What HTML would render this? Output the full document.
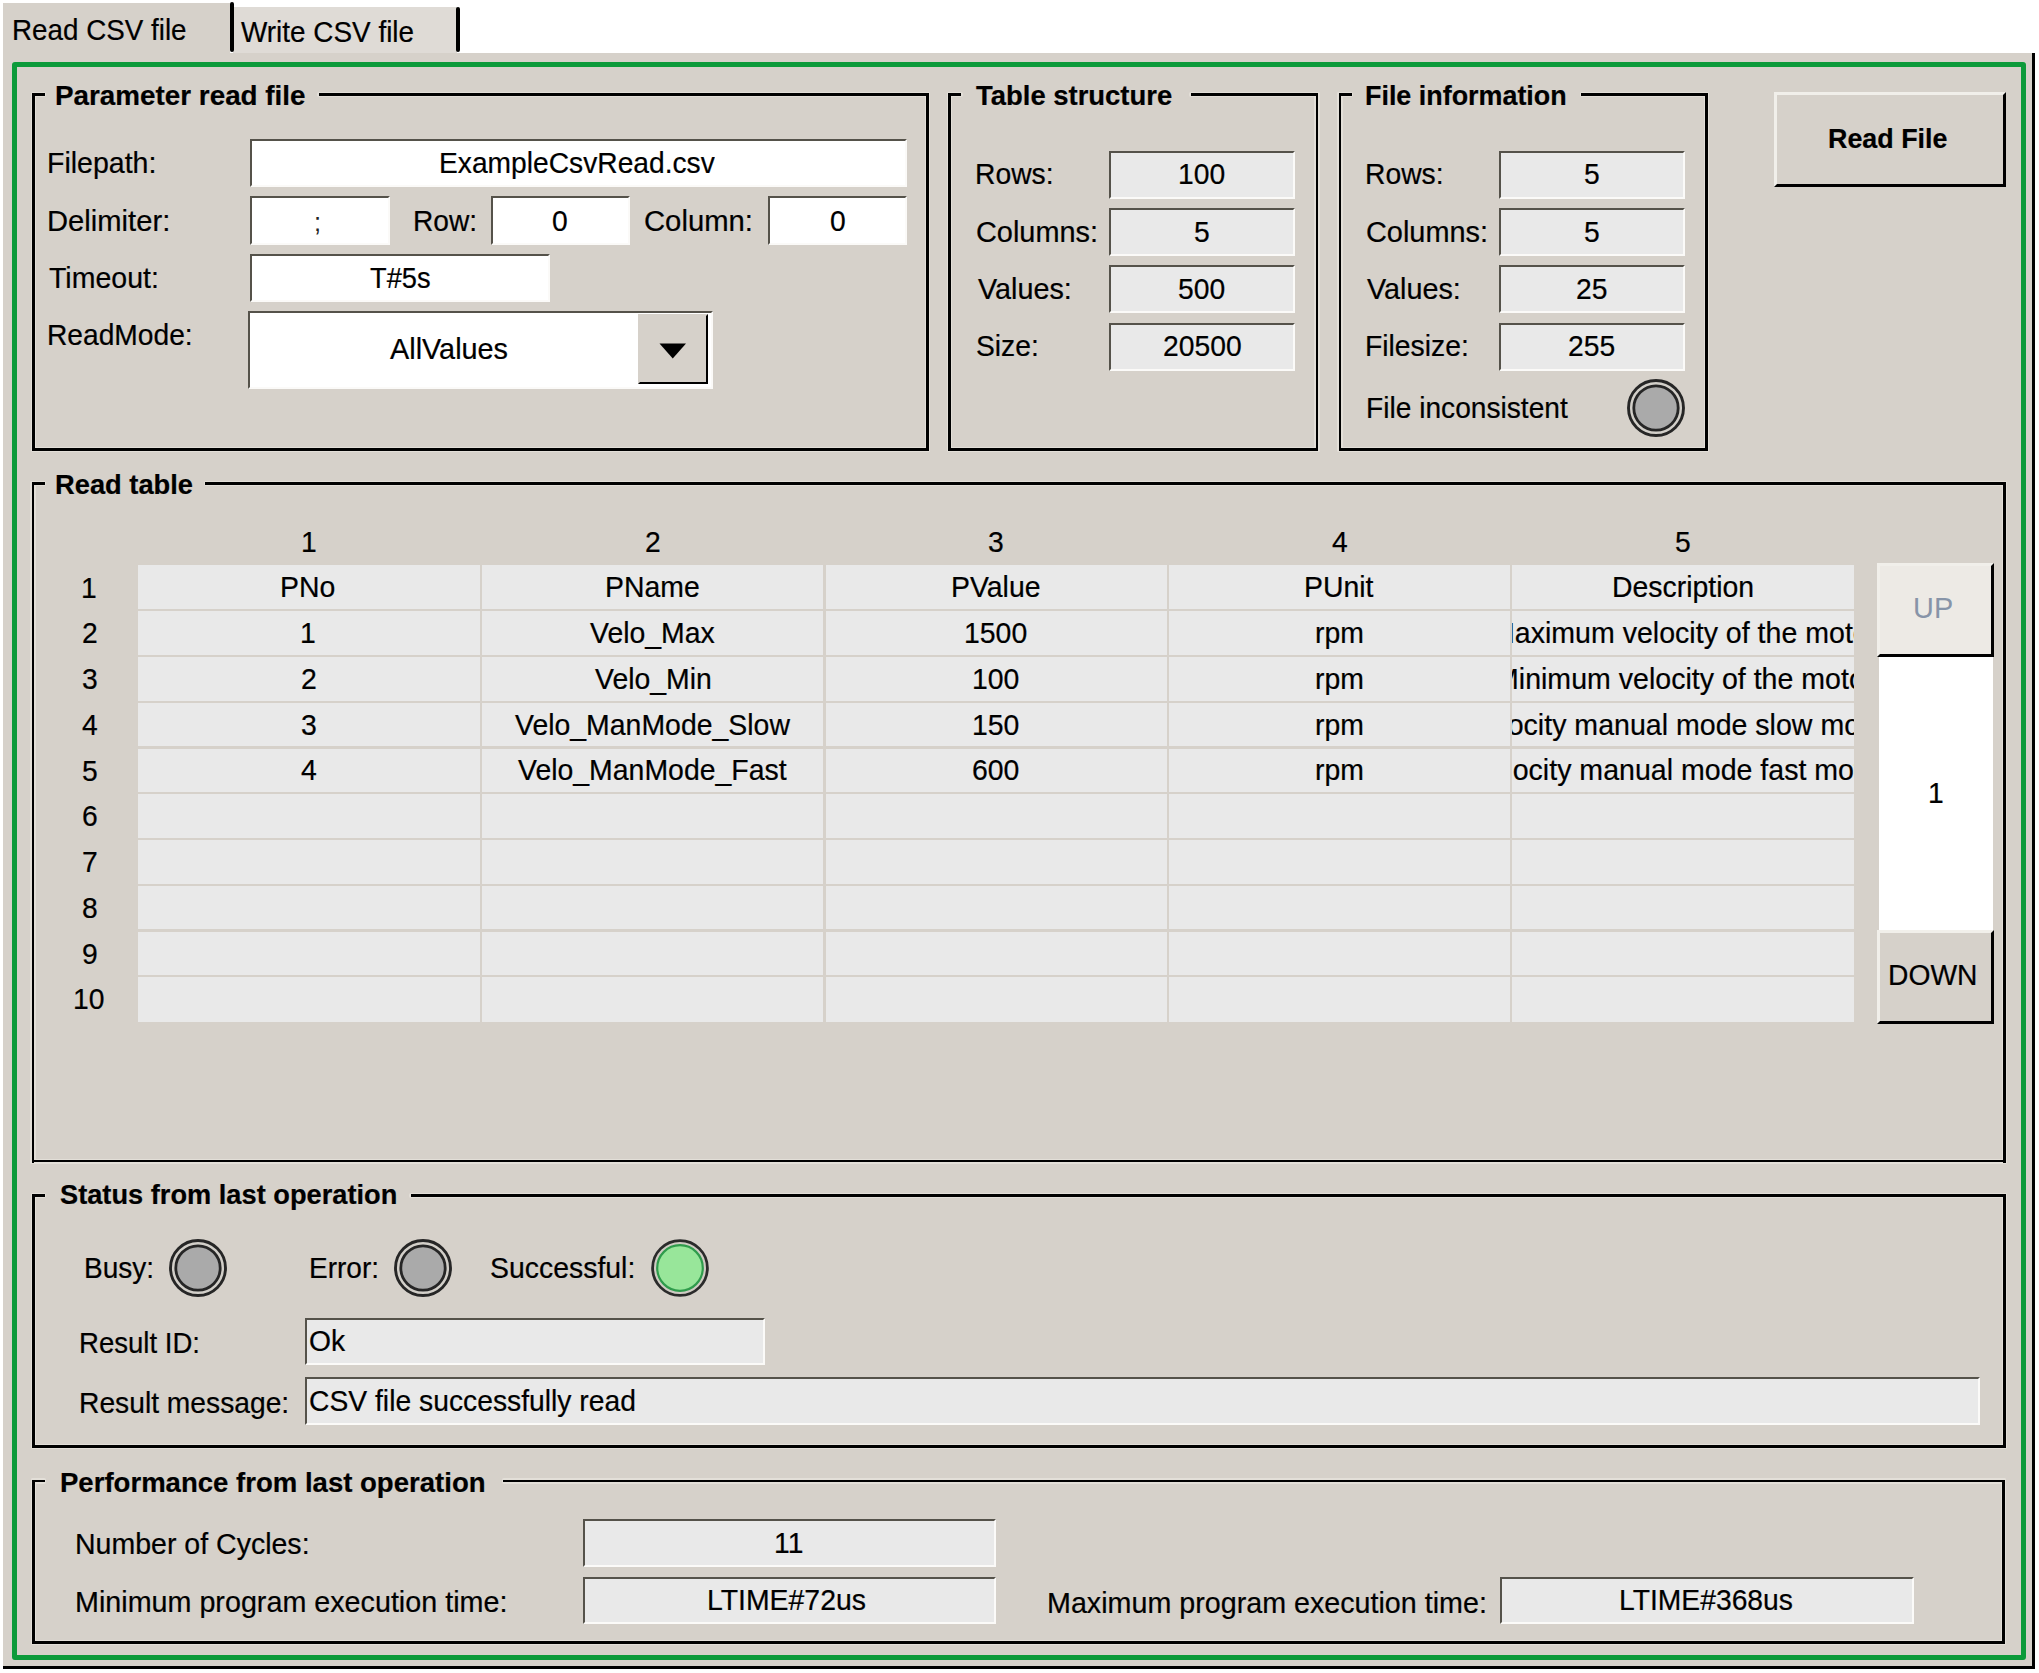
<!DOCTYPE html>
<html><head><meta charset="utf-8"><style>
html,body{margin:0;padding:0;}
body{width:2039px;height:1673px;background:#fff;position:relative;overflow:hidden;font-family:"Liberation Sans",sans-serif;}
body div, body svg{position:absolute;}
.t{white-space:nowrap;-webkit-text-stroke-width:0.2px;}
</style></head><body>
<div style="left:3.00px;top:3.00px;width:227.00px;height:53.00px;background:#d6d1ca;"></div>
<div style="left:233.00px;top:6.50px;width:224.00px;height:49.50px;background:#dfdbd6;"></div>
<div style="left:229.50px;top:2.00px;width:4.00px;height:50.00px;background:#000;border-radius:2px;"></div>
<div style="left:456.00px;top:6.50px;width:4.00px;height:45.50px;background:#000;border-radius:2px;"></div>
<div style="left:3.00px;top:53.00px;width:2032.00px;height:1616.00px;background:#d6d1ca;"></div>
<div style="left:2032.00px;top:53.00px;width:3.20px;height:1616.00px;background:#000;"></div>
<div style="left:3.00px;top:1665.80px;width:2032.20px;height:3.20px;background:#000;"></div>
<div style="left:12.00px;top:62.00px;width:2014.30px;height:1598.20px;background:transparent;box-sizing:border-box;border:5.6px solid #0c9a3a;border-radius:3px;"></div>
<div style="left:30.60px;top:91.60px;width:15.80px;height:5.40px;background:#e3dfd8;border-radius:2px;"></div>
<div style="left:317.40px;top:91.60px;width:612.70px;height:5.40px;background:#e3dfd8;border-radius:2px;"></div>
<div style="left:30.60px;top:91.60px;width:5.40px;height:360.50px;background:#e3dfd8;border-radius:2px;"></div>
<div style="left:924.70px;top:91.60px;width:5.40px;height:360.50px;background:#e3dfd8;border-radius:2px;"></div>
<div style="left:30.60px;top:446.70px;width:899.50px;height:5.40px;background:#e3dfd8;border-radius:2px;"></div>
<div style="left:947.00px;top:91.60px;width:15.80px;height:5.40px;background:#e3dfd8;border-radius:2px;"></div>
<div style="left:1189.30px;top:91.60px;width:130.30px;height:5.40px;background:#e3dfd8;border-radius:2px;"></div>
<div style="left:947.00px;top:91.60px;width:5.40px;height:360.60px;background:#e3dfd8;border-radius:2px;"></div>
<div style="left:1314.20px;top:91.60px;width:5.40px;height:360.60px;background:#e3dfd8;border-radius:2px;"></div>
<div style="left:947.00px;top:446.80px;width:372.60px;height:5.40px;background:#e3dfd8;border-radius:2px;"></div>
<div style="left:1337.40px;top:91.60px;width:15.80px;height:5.40px;background:#e3dfd8;border-radius:2px;"></div>
<div style="left:1579.60px;top:91.60px;width:129.40px;height:5.40px;background:#e3dfd8;border-radius:2px;"></div>
<div style="left:1337.40px;top:91.60px;width:5.40px;height:360.80px;background:#e3dfd8;border-radius:2px;"></div>
<div style="left:1703.60px;top:91.60px;width:5.40px;height:360.80px;background:#e3dfd8;border-radius:2px;"></div>
<div style="left:1337.40px;top:447.00px;width:371.60px;height:5.40px;background:#e3dfd8;border-radius:2px;"></div>
<div style="left:30.40px;top:480.60px;width:15.80px;height:5.40px;background:#e3dfd8;border-radius:2px;"></div>
<div style="left:204.00px;top:480.60px;width:1803.00px;height:5.40px;background:#e3dfd8;border-radius:2px;"></div>
<div style="left:30.40px;top:480.60px;width:5.40px;height:683.30px;background:#e3dfd8;border-radius:2px;"></div>
<div style="left:2001.60px;top:480.60px;width:5.40px;height:683.30px;background:#e3dfd8;border-radius:2px;"></div>
<div style="left:30.40px;top:1158.50px;width:1976.60px;height:5.40px;background:#e3dfd8;border-radius:2px;"></div>
<div style="left:30.60px;top:1192.60px;width:15.80px;height:5.40px;background:#e3dfd8;border-radius:2px;"></div>
<div style="left:409.20px;top:1192.60px;width:1598.20px;height:5.40px;background:#e3dfd8;border-radius:2px;"></div>
<div style="left:30.60px;top:1192.60px;width:5.40px;height:256.60px;background:#e3dfd8;border-radius:2px;"></div>
<div style="left:2002.00px;top:1192.60px;width:5.40px;height:256.60px;background:#e3dfd8;border-radius:2px;"></div>
<div style="left:30.60px;top:1443.80px;width:1976.80px;height:5.40px;background:#e3dfd8;border-radius:2px;"></div>
<div style="left:30.60px;top:1478.40px;width:15.80px;height:5.40px;background:#e3dfd8;border-radius:2px;"></div>
<div style="left:501.90px;top:1478.40px;width:1504.10px;height:5.40px;background:#e3dfd8;border-radius:2px;"></div>
<div style="left:30.60px;top:1478.40px;width:5.40px;height:166.80px;background:#e3dfd8;border-radius:2px;"></div>
<div style="left:2000.60px;top:1478.40px;width:5.40px;height:166.80px;background:#e3dfd8;border-radius:2px;"></div>
<div style="left:30.60px;top:1639.80px;width:1975.40px;height:5.40px;background:#e3dfd8;border-radius:2px;"></div>
<div style="left:32.00px;top:93.00px;width:13.00px;height:2.60px;background:#000;"></div>
<div style="left:318.80px;top:93.00px;width:609.90px;height:2.60px;background:#000;"></div>
<div style="left:32.00px;top:93.00px;width:2.60px;height:357.70px;background:#000;"></div>
<div style="left:926.10px;top:93.00px;width:2.60px;height:357.70px;background:#000;"></div>
<div style="left:32.00px;top:448.10px;width:896.70px;height:2.60px;background:#000;"></div>
<div style="left:250.00px;top:139.00px;width:657.00px;height:48.30px;background:#fff;box-sizing:border-box;border-style:solid;border-width:2.8px;border-color:#55524a #fbfaf8 #fbfaf8 #55524a;"></div>
<div style="left:250.00px;top:196.30px;width:139.60px;height:48.30px;background:#fff;box-sizing:border-box;border-style:solid;border-width:2.8px;border-color:#55524a #fbfaf8 #fbfaf8 #55524a;"></div>
<div style="left:490.80px;top:196.30px;width:139.20px;height:48.30px;background:#fff;box-sizing:border-box;border-style:solid;border-width:2.8px;border-color:#55524a #fbfaf8 #fbfaf8 #55524a;"></div>
<div style="left:768.00px;top:196.30px;width:139.30px;height:48.30px;background:#fff;box-sizing:border-box;border-style:solid;border-width:2.8px;border-color:#55524a #fbfaf8 #fbfaf8 #55524a;"></div>
<div style="left:250.00px;top:254.00px;width:300.00px;height:48.00px;background:#fff;box-sizing:border-box;border-style:solid;border-width:2.8px;border-color:#55524a #fbfaf8 #fbfaf8 #55524a;"></div>
<div style="left:247.60px;top:311.30px;width:465.40px;height:77.90px;background:#fff;box-sizing:border-box;border-style:solid;border-width:2.8px;border-color:#55524a #fbfaf8 #fbfaf8 #55524a;"></div>
<div style="left:637.60px;top:313.90px;width:70.70px;height:70.30px;background:#d6d1ca;box-sizing:border-box;border-style:solid;border-width:2.8px;border-color:#d6d1ca #000 #000 #d6d1ca;"></div>
<svg width="30" height="18" style="position:absolute;left:658px;top:341.5px"><polygon points="1.5,1.5 28,1.5 14.75,16.5" fill="#000"/></svg>
<div style="left:948.40px;top:93.00px;width:13.00px;height:2.60px;background:#000;"></div>
<div style="left:1190.70px;top:93.00px;width:127.50px;height:2.60px;background:#000;"></div>
<div style="left:948.40px;top:93.00px;width:2.60px;height:357.80px;background:#000;"></div>
<div style="left:1315.60px;top:93.00px;width:2.60px;height:357.80px;background:#000;"></div>
<div style="left:948.40px;top:448.20px;width:369.80px;height:2.60px;background:#000;"></div>
<div style="left:1109.30px;top:150.70px;width:185.70px;height:48.00px;background:#e9e9e9;box-sizing:border-box;border-style:solid;border-width:2.8px;border-color:#55524a #fbfaf8 #fbfaf8 #55524a;"></div>
<div style="left:1109.30px;top:208.00px;width:185.70px;height:48.00px;background:#e9e9e9;box-sizing:border-box;border-style:solid;border-width:2.8px;border-color:#55524a #fbfaf8 #fbfaf8 #55524a;"></div>
<div style="left:1109.30px;top:265.30px;width:185.70px;height:48.00px;background:#e9e9e9;box-sizing:border-box;border-style:solid;border-width:2.8px;border-color:#55524a #fbfaf8 #fbfaf8 #55524a;"></div>
<div style="left:1109.30px;top:322.60px;width:185.70px;height:48.00px;background:#e9e9e9;box-sizing:border-box;border-style:solid;border-width:2.8px;border-color:#55524a #fbfaf8 #fbfaf8 #55524a;"></div>
<div style="left:1338.80px;top:93.00px;width:13.00px;height:2.60px;background:#000;"></div>
<div style="left:1581.00px;top:93.00px;width:126.60px;height:2.60px;background:#000;"></div>
<div style="left:1338.80px;top:93.00px;width:2.60px;height:358.00px;background:#000;"></div>
<div style="left:1705.00px;top:93.00px;width:2.60px;height:358.00px;background:#000;"></div>
<div style="left:1338.80px;top:448.40px;width:368.80px;height:2.60px;background:#000;"></div>
<div style="left:1499.00px;top:150.70px;width:186.00px;height:48.00px;background:#e9e9e9;box-sizing:border-box;border-style:solid;border-width:2.8px;border-color:#55524a #fbfaf8 #fbfaf8 #55524a;"></div>
<div style="left:1499.00px;top:208.00px;width:186.00px;height:48.00px;background:#e9e9e9;box-sizing:border-box;border-style:solid;border-width:2.8px;border-color:#55524a #fbfaf8 #fbfaf8 #55524a;"></div>
<div style="left:1499.00px;top:265.30px;width:186.00px;height:48.00px;background:#e9e9e9;box-sizing:border-box;border-style:solid;border-width:2.8px;border-color:#55524a #fbfaf8 #fbfaf8 #55524a;"></div>
<div style="left:1499.00px;top:322.60px;width:186.00px;height:48.00px;background:#e9e9e9;box-sizing:border-box;border-style:solid;border-width:2.8px;border-color:#55524a #fbfaf8 #fbfaf8 #55524a;"></div>
<svg width="62" height="62" style="position:absolute;left:1625.2px;top:377.2px"><circle cx="31" cy="31" r="27.5" fill="#d2cfc9" stroke="#262626" stroke-width="2.9"/><circle cx="31" cy="31" r="22.2" fill="#aaaaaa" stroke="#262626" stroke-width="2.8"/></svg>
<div style="left:1773.70px;top:92.30px;width:231.90px;height:95.10px;background:#d6d1ca;box-sizing:border-box;border-style:solid;border-width:3px;border-color:#f1efea #000 #000 #f1efea;"></div>
<div style="left:31.80px;top:482.00px;width:13.00px;height:2.60px;background:#000;"></div>
<div style="left:205.40px;top:482.00px;width:1800.20px;height:2.60px;background:#000;"></div>
<div style="left:31.80px;top:482.00px;width:2.60px;height:680.50px;background:#000;"></div>
<div style="left:2003.00px;top:482.00px;width:2.60px;height:680.50px;background:#000;"></div>
<div style="left:31.80px;top:1159.90px;width:1973.80px;height:2.60px;background:#000;"></div>
<div style="left:137.70px;top:564.50px;width:342.14px;height:44.55px;background:#e9e9e9;"></div>
<div style="left:482.24px;top:564.50px;width:340.94px;height:44.55px;background:#e9e9e9;"></div>
<div style="left:825.58px;top:564.50px;width:340.94px;height:44.55px;background:#e9e9e9;"></div>
<div style="left:1168.92px;top:564.50px;width:340.94px;height:44.55px;background:#e9e9e9;"></div>
<div style="left:1512.26px;top:564.50px;width:342.14px;height:44.55px;background:#e9e9e9;"></div>
<div style="left:137.70px;top:611.45px;width:342.14px;height:43.35px;background:#e9e9e9;"></div>
<div style="left:482.24px;top:611.45px;width:340.94px;height:43.35px;background:#e9e9e9;"></div>
<div style="left:825.58px;top:611.45px;width:340.94px;height:43.35px;background:#e9e9e9;"></div>
<div style="left:1168.92px;top:611.45px;width:340.94px;height:43.35px;background:#e9e9e9;"></div>
<div style="left:1512.26px;top:611.45px;width:342.14px;height:43.35px;background:#e9e9e9;"></div>
<div style="left:137.70px;top:657.20px;width:342.14px;height:43.35px;background:#e9e9e9;"></div>
<div style="left:482.24px;top:657.20px;width:340.94px;height:43.35px;background:#e9e9e9;"></div>
<div style="left:825.58px;top:657.20px;width:340.94px;height:43.35px;background:#e9e9e9;"></div>
<div style="left:1168.92px;top:657.20px;width:340.94px;height:43.35px;background:#e9e9e9;"></div>
<div style="left:1512.26px;top:657.20px;width:342.14px;height:43.35px;background:#e9e9e9;"></div>
<div style="left:137.70px;top:702.95px;width:342.14px;height:43.35px;background:#e9e9e9;"></div>
<div style="left:482.24px;top:702.95px;width:340.94px;height:43.35px;background:#e9e9e9;"></div>
<div style="left:825.58px;top:702.95px;width:340.94px;height:43.35px;background:#e9e9e9;"></div>
<div style="left:1168.92px;top:702.95px;width:340.94px;height:43.35px;background:#e9e9e9;"></div>
<div style="left:1512.26px;top:702.95px;width:342.14px;height:43.35px;background:#e9e9e9;"></div>
<div style="left:137.70px;top:748.70px;width:342.14px;height:43.35px;background:#e9e9e9;"></div>
<div style="left:482.24px;top:748.70px;width:340.94px;height:43.35px;background:#e9e9e9;"></div>
<div style="left:825.58px;top:748.70px;width:340.94px;height:43.35px;background:#e9e9e9;"></div>
<div style="left:1168.92px;top:748.70px;width:340.94px;height:43.35px;background:#e9e9e9;"></div>
<div style="left:1512.26px;top:748.70px;width:342.14px;height:43.35px;background:#e9e9e9;"></div>
<div style="left:137.70px;top:794.45px;width:342.14px;height:43.35px;background:#e9e9e9;"></div>
<div style="left:482.24px;top:794.45px;width:340.94px;height:43.35px;background:#e9e9e9;"></div>
<div style="left:825.58px;top:794.45px;width:340.94px;height:43.35px;background:#e9e9e9;"></div>
<div style="left:1168.92px;top:794.45px;width:340.94px;height:43.35px;background:#e9e9e9;"></div>
<div style="left:1512.26px;top:794.45px;width:342.14px;height:43.35px;background:#e9e9e9;"></div>
<div style="left:137.70px;top:840.20px;width:342.14px;height:43.35px;background:#e9e9e9;"></div>
<div style="left:482.24px;top:840.20px;width:340.94px;height:43.35px;background:#e9e9e9;"></div>
<div style="left:825.58px;top:840.20px;width:340.94px;height:43.35px;background:#e9e9e9;"></div>
<div style="left:1168.92px;top:840.20px;width:340.94px;height:43.35px;background:#e9e9e9;"></div>
<div style="left:1512.26px;top:840.20px;width:342.14px;height:43.35px;background:#e9e9e9;"></div>
<div style="left:137.70px;top:885.95px;width:342.14px;height:43.35px;background:#e9e9e9;"></div>
<div style="left:482.24px;top:885.95px;width:340.94px;height:43.35px;background:#e9e9e9;"></div>
<div style="left:825.58px;top:885.95px;width:340.94px;height:43.35px;background:#e9e9e9;"></div>
<div style="left:1168.92px;top:885.95px;width:340.94px;height:43.35px;background:#e9e9e9;"></div>
<div style="left:1512.26px;top:885.95px;width:342.14px;height:43.35px;background:#e9e9e9;"></div>
<div style="left:137.70px;top:931.70px;width:342.14px;height:43.35px;background:#e9e9e9;"></div>
<div style="left:482.24px;top:931.70px;width:340.94px;height:43.35px;background:#e9e9e9;"></div>
<div style="left:825.58px;top:931.70px;width:340.94px;height:43.35px;background:#e9e9e9;"></div>
<div style="left:1168.92px;top:931.70px;width:340.94px;height:43.35px;background:#e9e9e9;"></div>
<div style="left:1512.26px;top:931.70px;width:342.14px;height:43.35px;background:#e9e9e9;"></div>
<div style="left:137.70px;top:977.45px;width:342.14px;height:44.55px;background:#e9e9e9;"></div>
<div style="left:482.24px;top:977.45px;width:340.94px;height:44.55px;background:#e9e9e9;"></div>
<div style="left:825.58px;top:977.45px;width:340.94px;height:44.55px;background:#e9e9e9;"></div>
<div style="left:1168.92px;top:977.45px;width:340.94px;height:44.55px;background:#e9e9e9;"></div>
<div style="left:1512.26px;top:977.45px;width:342.14px;height:44.55px;background:#e9e9e9;"></div>
<div style="left:1877.00px;top:563.20px;width:117.00px;height:93.80px;background:#edeae5;box-sizing:border-box;border-style:solid;border-width:3px;border-color:#f1efea #000 #000 #f1efea;"></div>
<div style="left:1879.00px;top:657.00px;width:113.60px;height:273.30px;background:#fff;"></div>
<div style="left:1877.40px;top:930.30px;width:116.60px;height:93.50px;background:#d6d1ca;box-sizing:border-box;border-style:solid;border-width:3px;border-color:#f1efea #000 #000 #f1efea;"></div>
<div style="left:32.00px;top:1194.00px;width:13.00px;height:2.60px;background:#000;"></div>
<div style="left:410.60px;top:1194.00px;width:1595.40px;height:2.60px;background:#000;"></div>
<div style="left:32.00px;top:1194.00px;width:2.60px;height:253.80px;background:#000;"></div>
<div style="left:2003.40px;top:1194.00px;width:2.60px;height:253.80px;background:#000;"></div>
<div style="left:32.00px;top:1445.20px;width:1974.00px;height:2.60px;background:#000;"></div>
<svg width="62" height="62" style="position:absolute;left:167.2px;top:1237.2px"><circle cx="31" cy="31" r="27.5" fill="#d2cfc9" stroke="#262626" stroke-width="2.9"/><circle cx="31" cy="31" r="22.2" fill="#aaaaaa" stroke="#262626" stroke-width="2.8"/></svg>
<svg width="62" height="62" style="position:absolute;left:391.8px;top:1237.2px"><circle cx="31" cy="31" r="27.5" fill="#d2cfc9" stroke="#262626" stroke-width="2.9"/><circle cx="31" cy="31" r="22.2" fill="#aaaaaa" stroke="#262626" stroke-width="2.8"/></svg>
<svg width="62" height="62" style="position:absolute;left:648.8px;top:1237.4px"><circle cx="31" cy="31" r="27.4" fill="#cfcbc3" stroke="#2b2b2b" stroke-width="2.8"/><circle cx="31" cy="31" r="22.8" fill="#98e69a" stroke="#2f9c4c" stroke-width="2.2"/></svg>
<div style="left:304.80px;top:1317.50px;width:460.40px;height:47.80px;background:#e9e9e9;box-sizing:border-box;border-style:solid;border-width:2.8px;border-color:#55524a #fbfaf8 #fbfaf8 #55524a;"></div>
<div style="left:304.80px;top:1377.40px;width:1675.40px;height:47.20px;background:#e9e9e9;box-sizing:border-box;border-style:solid;border-width:2.8px;border-color:#55524a #fbfaf8 #fbfaf8 #55524a;"></div>
<div style="left:32.00px;top:1479.80px;width:13.00px;height:2.60px;background:#000;"></div>
<div style="left:503.30px;top:1479.80px;width:1501.30px;height:2.60px;background:#000;"></div>
<div style="left:32.00px;top:1479.80px;width:2.60px;height:164.00px;background:#000;"></div>
<div style="left:2002.00px;top:1479.80px;width:2.60px;height:164.00px;background:#000;"></div>
<div style="left:32.00px;top:1641.20px;width:1972.60px;height:2.60px;background:#000;"></div>
<div style="left:582.60px;top:1518.90px;width:413.90px;height:47.80px;background:#e9e9e9;box-sizing:border-box;border-style:solid;border-width:2.8px;border-color:#55524a #fbfaf8 #fbfaf8 #55524a;"></div>
<div style="left:582.60px;top:1576.50px;width:413.90px;height:47.80px;background:#e9e9e9;box-sizing:border-box;border-style:solid;border-width:2.8px;border-color:#55524a #fbfaf8 #fbfaf8 #55524a;"></div>
<div style="left:1499.60px;top:1577.20px;width:414.00px;height:46.70px;background:#e9e9e9;box-sizing:border-box;border-style:solid;border-width:2.8px;border-color:#55524a #fbfaf8 #fbfaf8 #55524a;"></div>
<div class="t" style="left:11.51px;top:17.40px;font-size:28px;line-height:28px;transform-origin:0 23.70px;transform:scale(0.9926,1.0500);color:#000;">Read CSV file</div>
<div class="t" style="left:240.80px;top:19.40px;font-size:28px;line-height:28px;transform-origin:0 23.70px;transform:scale(0.9961,1.0500);color:#000;">Write CSV file</div>
<div class="t" style="left:55.47px;top:82.54px;font-size:27px;line-height:27px;transform-origin:0 22.86px;transform:scale(1.0305,1.0400);color:#000;font-weight:bold;">Parameter read file</div>
<div class="t" style="left:47.46px;top:150.00px;font-size:28px;line-height:28px;transform-origin:0 23.70px;transform:scale(1.0182,1.0500);color:#000;">Filepath:</div>
<div class="t" style="left:47.42px;top:207.90px;font-size:28px;line-height:28px;transform-origin:0 23.70px;transform:scale(1.0423,1.0500);color:#000;">Delimiter:</div>
<div class="t" style="left:48.50px;top:264.50px;font-size:28px;line-height:28px;transform-origin:0 23.70px;transform:scale(1.0179,1.0500);color:#000;">Timeout:</div>
<div class="t" style="left:47.49px;top:322.40px;font-size:28px;line-height:28px;transform-origin:0 23.70px;transform:scale(1.0065,1.0500);color:#000;">ReadMode:</div>
<div class="t" style="left:439.09px;top:150.00px;font-size:28px;line-height:28px;transform-origin:0 23.70px;transform:scale(1.0071,1.0500);color:#000;">ExampleCsvRead.csv</div>
<div class="t" style="left:314.46px;top:210.44px;font-size:25px;line-height:25px;transform-origin:0 21.16px;transform:scale(1.0100,1.0500);color:#222;-webkit-text-stroke-width:0;">;</div>
<div class="t" style="left:412.99px;top:207.90px;font-size:28px;line-height:28px;transform-origin:0 23.70px;transform:scale(1.0048,1.0500);color:#000;">Row:</div>
<div class="t" style="left:552.32px;top:207.90px;font-size:28px;line-height:28px;transform-origin:0 23.70px;transform:scale(1.0100,1.0500);color:#000;">0</div>
<div class="t" style="left:644.26px;top:207.90px;font-size:28px;line-height:28px;transform-origin:0 23.70px;transform:scale(1.0445,1.0500);color:#000;">Column:</div>
<div class="t" style="left:829.62px;top:207.90px;font-size:28px;line-height:28px;transform-origin:0 23.70px;transform:scale(1.0100,1.0500);color:#000;">0</div>
<div class="t" style="left:370.20px;top:264.70px;font-size:28px;line-height:28px;transform-origin:0 23.70px;transform:scale(0.9731,1.0500);color:#000;">T#5s</div>
<div class="t" style="left:390.00px;top:335.70px;font-size:28px;line-height:28px;transform-origin:0 23.70px;transform:scale(1.0295,1.0500);color:#000;">AllValues</div>
<div class="t" style="left:975.80px;top:82.54px;font-size:27px;line-height:27px;transform-origin:0 22.86px;transform:scale(1.0164,1.0400);color:#000;font-weight:bold;">Table structure</div>
<div class="t" style="left:975.48px;top:161.30px;font-size:28px;line-height:28px;transform-origin:0 23.70px;transform:scale(1.0100,1.0500);color:#000;">Rows:</div>
<div class="t" style="left:1177.89px;top:161.30px;font-size:28px;line-height:28px;transform-origin:0 23.70px;transform:scale(1.0100,1.0500);color:#000;">100</div>
<div class="t" style="left:976.47px;top:218.60px;font-size:28px;line-height:28px;transform-origin:0 23.70px;transform:scale(1.0322,1.0500);color:#000;">Columns:</div>
<div class="t" style="left:1194.12px;top:218.60px;font-size:28px;line-height:28px;transform-origin:0 23.70px;transform:scale(1.0100,1.0500);color:#000;">5</div>
<div class="t" style="left:977.50px;top:275.90px;font-size:28px;line-height:28px;transform-origin:0 23.70px;transform:scale(1.0275,1.0500);color:#000;">Values:</div>
<div class="t" style="left:1178.39px;top:275.90px;font-size:28px;line-height:28px;transform-origin:0 23.70px;transform:scale(1.0100,1.0500);color:#000;">500</div>
<div class="t" style="left:976.49px;top:333.20px;font-size:28px;line-height:28px;transform-origin:0 23.70px;transform:scale(1.0089,1.0500);color:#000;">Size:</div>
<div class="t" style="left:1162.66px;top:333.20px;font-size:28px;line-height:28px;transform-origin:0 23.70px;transform:scale(1.0100,1.0500);color:#000;">20500</div>
<div class="t" style="left:1364.80px;top:82.54px;font-size:27px;line-height:27px;transform-origin:0 22.86px;transform:scale(0.9960,1.0400);color:#000;font-weight:bold;">File information</div>
<div class="t" style="left:1364.98px;top:161.30px;font-size:28px;line-height:28px;transform-origin:0 23.70px;transform:scale(1.0100,1.0500);color:#000;">Rows:</div>
<div class="t" style="left:1583.92px;top:161.30px;font-size:28px;line-height:28px;transform-origin:0 23.70px;transform:scale(1.0100,1.0500);color:#000;">5</div>
<div class="t" style="left:1365.97px;top:218.60px;font-size:28px;line-height:28px;transform-origin:0 23.70px;transform:scale(1.0322,1.0500);color:#000;">Columns:</div>
<div class="t" style="left:1583.92px;top:218.60px;font-size:28px;line-height:28px;transform-origin:0 23.70px;transform:scale(1.0100,1.0500);color:#000;">5</div>
<div class="t" style="left:1367.00px;top:275.90px;font-size:28px;line-height:28px;transform-origin:0 23.70px;transform:scale(1.0275,1.0500);color:#000;">Values:</div>
<div class="t" style="left:1576.06px;top:275.90px;font-size:28px;line-height:28px;transform-origin:0 23.70px;transform:scale(1.0100,1.0500);color:#000;">25</div>
<div class="t" style="left:1364.98px;top:333.20px;font-size:28px;line-height:28px;transform-origin:0 23.70px;transform:scale(1.0110,1.0500);color:#000;">Filesize:</div>
<div class="t" style="left:1568.19px;top:333.20px;font-size:28px;line-height:28px;transform-origin:0 23.70px;transform:scale(1.0100,1.0500);color:#000;">255</div>
<div class="t" style="left:1365.99px;top:394.50px;font-size:28px;line-height:28px;transform-origin:0 23.70px;transform:scale(1.0051,1.0500);color:#000;">File inconsistent</div>
<div class="t" style="left:1828.00px;top:125.94px;font-size:27px;line-height:27px;transform-origin:0 22.86px;transform:scale(0.9956,1.0400);color:#000;font-weight:bold;">Read File</div>
<div class="t" style="left:55.49px;top:472.04px;font-size:27px;line-height:27px;transform-origin:0 22.86px;transform:scale(1.0109,1.0400);color:#000;font-weight:bold;">Read table</div>
<div class="t" style="left:300.79px;top:528.90px;font-size:28px;line-height:28px;transform-origin:0 23.70px;transform:scale(1.0100,1.0500);color:#000;">1</div>
<div class="t" style="left:644.63px;top:528.90px;font-size:28px;line-height:28px;transform-origin:0 23.70px;transform:scale(1.0100,1.0500);color:#000;">2</div>
<div class="t" style="left:987.97px;top:528.90px;font-size:28px;line-height:28px;transform-origin:0 23.70px;transform:scale(1.0100,1.0500);color:#000;">3</div>
<div class="t" style="left:1331.82px;top:528.90px;font-size:28px;line-height:28px;transform-origin:0 23.70px;transform:scale(1.0100,1.0500);color:#000;">4</div>
<div class="t" style="left:1674.65px;top:528.90px;font-size:28px;line-height:28px;transform-origin:0 23.70px;transform:scale(1.0100,1.0500);color:#000;">5</div>
<div class="t" style="left:81.22px;top:574.50px;font-size:28px;line-height:28px;transform-origin:0 23.70px;transform:scale(1.0100,1.0500);color:#000;">1</div>
<div style="left:137.70px;top:557.80px;width:342.14px;height:60px;overflow:hidden;"><div class="t" style="left:142.70px;top:16.70px;font-size:28px;line-height:28px;transform-origin:0 23.70px;transform:scale(1.0150,1.0500);color:#000;">PNo</div></div>
<div style="left:482.24px;top:557.80px;width:340.94px;height:60px;overflow:hidden;"><div class="t" style="left:122.36px;top:16.70px;font-size:28px;line-height:28px;transform-origin:0 23.70px;transform:scale(1.0150,1.0500);color:#000;">PName</div></div>
<div style="left:825.58px;top:557.80px;width:340.94px;height:60px;overflow:hidden;"><div class="t" style="left:124.98px;top:16.70px;font-size:28px;line-height:28px;transform-origin:0 23.70px;transform:scale(1.0150,1.0500);color:#000;">PValue</div></div>
<div style="left:1168.92px;top:557.80px;width:340.94px;height:60px;overflow:hidden;"><div class="t" style="left:134.60px;top:16.70px;font-size:28px;line-height:28px;transform-origin:0 23.70px;transform:scale(1.0150,1.0500);color:#000;">PUnit</div></div>
<div style="left:1512.26px;top:557.80px;width:342.14px;height:60px;overflow:hidden;"><div class="t" style="left:99.78px;top:16.70px;font-size:28px;line-height:28px;transform-origin:0 23.70px;transform:scale(1.0150,1.0500);color:#000;">Description</div></div>
<div class="t" style="left:81.72px;top:620.25px;font-size:28px;line-height:28px;transform-origin:0 23.70px;transform:scale(1.0100,1.0500);color:#000;">2</div>
<div style="left:137.70px;top:603.55px;width:342.14px;height:60px;overflow:hidden;"><div class="t" style="left:162.44px;top:16.70px;font-size:28px;line-height:28px;transform-origin:0 23.70px;transform:scale(1.0150,1.0500);color:#000;">1</div></div>
<div style="left:482.24px;top:603.55px;width:340.94px;height:60px;overflow:hidden;"><div class="t" style="left:108.07px;top:16.70px;font-size:28px;line-height:28px;transform-origin:0 23.70px;transform:scale(1.0150,1.0500);color:#000;">Velo_Max</div></div>
<div style="left:825.58px;top:603.55px;width:340.94px;height:60px;overflow:hidden;"><div class="t" style="left:138.13px;top:16.70px;font-size:28px;line-height:28px;transform-origin:0 23.70px;transform:scale(1.0150,1.0500);color:#000;">1500</div></div>
<div style="left:1168.92px;top:603.55px;width:340.94px;height:60px;overflow:hidden;"><div class="t" style="left:146.16px;top:16.70px;font-size:28px;line-height:28px;transform-origin:0 23.70px;transform:scale(1.0150,1.0500);color:#000;">rpm</div></div>
<div style="left:1512.26px;top:603.55px;width:342.14px;height:60px;overflow:hidden;"><div class="t" style="left:-20.92px;top:16.70px;font-size:28px;line-height:28px;transform-origin:0 23.70px;transform:scale(1.0200,1.0500);color:#000;">Maximum velocity of the motor</div></div>
<div class="t" style="left:81.72px;top:666.00px;font-size:28px;line-height:28px;transform-origin:0 23.70px;transform:scale(1.0100,1.0500);color:#000;">3</div>
<div style="left:137.70px;top:649.30px;width:342.14px;height:60px;overflow:hidden;"><div class="t" style="left:162.95px;top:16.70px;font-size:28px;line-height:28px;transform-origin:0 23.70px;transform:scale(1.0150,1.0500);color:#000;">2</div></div>
<div style="left:482.24px;top:649.30px;width:340.94px;height:60px;overflow:hidden;"><div class="t" style="left:112.81px;top:16.70px;font-size:28px;line-height:28px;transform-origin:0 23.70px;transform:scale(1.0150,1.0500);color:#000;">Velo_Min</div></div>
<div style="left:825.58px;top:649.30px;width:340.94px;height:60px;overflow:hidden;"><div class="t" style="left:146.04px;top:16.70px;font-size:28px;line-height:28px;transform-origin:0 23.70px;transform:scale(1.0150,1.0500);color:#000;">100</div></div>
<div style="left:1168.92px;top:649.30px;width:340.94px;height:60px;overflow:hidden;"><div class="t" style="left:146.16px;top:16.70px;font-size:28px;line-height:28px;transform-origin:0 23.70px;transform:scale(1.0150,1.0500);color:#000;">rpm</div></div>
<div style="left:1512.26px;top:649.30px;width:342.14px;height:60px;overflow:hidden;"><div class="t" style="left:-16.95px;top:16.70px;font-size:28px;line-height:28px;transform-origin:0 23.70px;transform:scale(1.0200,1.0500);color:#000;">Minimum velocity of the motor</div></div>
<div class="t" style="left:82.22px;top:711.75px;font-size:28px;line-height:28px;transform-origin:0 23.70px;transform:scale(1.0100,1.0500);color:#000;">4</div>
<div style="left:137.70px;top:695.05px;width:342.14px;height:60px;overflow:hidden;"><div class="t" style="left:162.95px;top:16.70px;font-size:28px;line-height:28px;transform-origin:0 23.70px;transform:scale(1.0150,1.0500);color:#000;">3</div></div>
<div style="left:482.24px;top:695.05px;width:340.94px;height:60px;overflow:hidden;"><div class="t" style="left:32.62px;top:16.70px;font-size:28px;line-height:28px;transform-origin:0 23.70px;transform:scale(1.0150,1.0500);color:#000;">Velo_ManMode_Slow</div></div>
<div style="left:825.58px;top:695.05px;width:340.94px;height:60px;overflow:hidden;"><div class="t" style="left:146.04px;top:16.70px;font-size:28px;line-height:28px;transform-origin:0 23.70px;transform:scale(1.0150,1.0500);color:#000;">150</div></div>
<div style="left:1168.92px;top:695.05px;width:340.94px;height:60px;overflow:hidden;"><div class="t" style="left:146.16px;top:16.70px;font-size:28px;line-height:28px;transform-origin:0 23.70px;transform:scale(1.0150,1.0500);color:#000;">rpm</div></div>
<div style="left:1512.26px;top:695.05px;width:342.14px;height:60px;overflow:hidden;"><div class="t" style="left:-44.70px;top:16.70px;font-size:28px;line-height:28px;transform-origin:0 23.70px;transform:scale(1.0200,1.0500);color:#000;">Velocity manual mode slow motion</div></div>
<div class="t" style="left:81.72px;top:757.50px;font-size:28px;line-height:28px;transform-origin:0 23.70px;transform:scale(1.0100,1.0500);color:#000;">5</div>
<div style="left:137.70px;top:740.80px;width:342.14px;height:60px;overflow:hidden;"><div class="t" style="left:163.46px;top:16.70px;font-size:28px;line-height:28px;transform-origin:0 23.70px;transform:scale(1.0150,1.0500);color:#000;">4</div></div>
<div style="left:482.24px;top:740.80px;width:340.94px;height:60px;overflow:hidden;"><div class="t" style="left:36.07px;top:16.70px;font-size:28px;line-height:28px;transform-origin:0 23.70px;transform:scale(1.0150,1.0500);color:#000;">Velo_ManMode_Fast</div></div>
<div style="left:825.58px;top:740.80px;width:340.94px;height:60px;overflow:hidden;"><div class="t" style="left:146.54px;top:16.70px;font-size:28px;line-height:28px;transform-origin:0 23.70px;transform:scale(1.0150,1.0500);color:#000;">600</div></div>
<div style="left:1168.92px;top:740.80px;width:340.94px;height:60px;overflow:hidden;"><div class="t" style="left:146.16px;top:16.70px;font-size:28px;line-height:28px;transform-origin:0 23.70px;transform:scale(1.0150,1.0500);color:#000;">rpm</div></div>
<div style="left:1512.26px;top:740.80px;width:342.14px;height:60px;overflow:hidden;"><div class="t" style="left:-39.14px;top:16.70px;font-size:28px;line-height:28px;transform-origin:0 23.70px;transform:scale(1.0200,1.0500);color:#000;">Velocity manual mode fast motion</div></div>
<div class="t" style="left:81.72px;top:803.25px;font-size:28px;line-height:28px;transform-origin:0 23.70px;transform:scale(1.0100,1.0500);color:#000;">6</div>
<div class="t" style="left:81.72px;top:849.00px;font-size:28px;line-height:28px;transform-origin:0 23.70px;transform:scale(1.0100,1.0500);color:#000;">7</div>
<div class="t" style="left:81.72px;top:894.75px;font-size:28px;line-height:28px;transform-origin:0 23.70px;transform:scale(1.0100,1.0500);color:#000;">8</div>
<div class="t" style="left:81.72px;top:940.50px;font-size:28px;line-height:28px;transform-origin:0 23.70px;transform:scale(1.0100,1.0500);color:#000;">9</div>
<div class="t" style="left:73.35px;top:986.25px;font-size:28px;line-height:28px;transform-origin:0 23.70px;transform:scale(1.0100,1.0500);color:#000;">10</div>
<div class="t" style="left:1913.23px;top:594.50px;font-size:28px;line-height:28px;transform-origin:0 23.70px;transform:scale(1.0326,1.0500);color:#8794a8;-webkit-text-stroke-width:0;">UP</div>
<div class="t" style="left:1928.01px;top:779.90px;font-size:28px;line-height:28px;transform-origin:0 23.70px;transform:scale(1.0100,1.0500);color:#000;">1</div>
<div class="t" style="left:1887.58px;top:961.90px;font-size:28px;line-height:28px;transform-origin:0 23.70px;transform:scale(1.0091,1.0500);color:#000;">DOWN</div>
<div class="t" style="left:60.20px;top:1182.24px;font-size:27px;line-height:27px;transform-origin:0 22.86px;transform:scale(1.0082,1.0400);color:#000;font-weight:bold;">Status from last operation</div>
<div class="t" style="left:83.50px;top:1254.70px;font-size:28px;line-height:28px;transform-origin:0 23.70px;transform:scale(1.0008,1.0500);color:#000;">Busy:</div>
<div class="t" style="left:308.50px;top:1254.70px;font-size:28px;line-height:28px;transform-origin:0 23.70px;transform:scale(1.0012,1.0500);color:#000;">Error:</div>
<div class="t" style="left:489.98px;top:1255.10px;font-size:28px;line-height:28px;transform-origin:0 23.70px;transform:scale(1.0150,1.0500);color:#000;">Successful:</div>
<div class="t" style="left:79.03px;top:1329.90px;font-size:28px;line-height:28px;transform-origin:0 23.70px;transform:scale(0.9845,1.0500);color:#000;">Result ID:</div>
<div class="t" style="left:309.49px;top:1328.10px;font-size:28px;line-height:28px;transform-origin:0 23.70px;transform:scale(1.0100,1.0500);color:#000;">Ok</div>
<div class="t" style="left:78.98px;top:1389.70px;font-size:28px;line-height:28px;transform-origin:0 23.70px;transform:scale(1.0080,1.0500);color:#000;">Result message:</div>
<div class="t" style="left:309.49px;top:1388.10px;font-size:28px;line-height:28px;transform-origin:0 23.70px;transform:scale(1.0100,1.0500);color:#000;">CSV file successfully read</div>
<div class="t" style="left:60.48px;top:1470.24px;font-size:27px;line-height:27px;transform-origin:0 22.86px;transform:scale(1.0202,1.0400);color:#000;font-weight:bold;">Performance from last operation</div>
<div class="t" style="left:75.46px;top:1530.90px;font-size:28px;line-height:28px;transform-origin:0 23.70px;transform:scale(1.0185,1.0500);color:#000;">Number of Cycles:</div>
<div class="t" style="left:773.90px;top:1530.10px;font-size:28px;line-height:28px;transform-origin:0 23.70px;transform:scale(1.0100,1.0500);color:#000;">11</div>
<div class="t" style="left:75.45px;top:1589.20px;font-size:28px;line-height:28px;transform-origin:0 23.70px;transform:scale(1.0253,1.0500);color:#000;">Minimum program execution time:</div>
<div class="t" style="left:707.02px;top:1587.20px;font-size:28px;line-height:28px;transform-origin:0 23.70px;transform:scale(1.0145,1.0500);color:#000;">LTIME#72us</div>
<div class="t" style="left:1046.75px;top:1589.50px;font-size:28px;line-height:28px;transform-origin:0 23.70px;transform:scale(1.0242,1.0500);color:#000;">Maximum program execution time:</div>
<div class="t" style="left:1619.01px;top:1587.20px;font-size:28px;line-height:28px;transform-origin:0 23.70px;transform:scale(1.0100,1.0500);color:#000;">LTIME#368us</div>
</body></html>
